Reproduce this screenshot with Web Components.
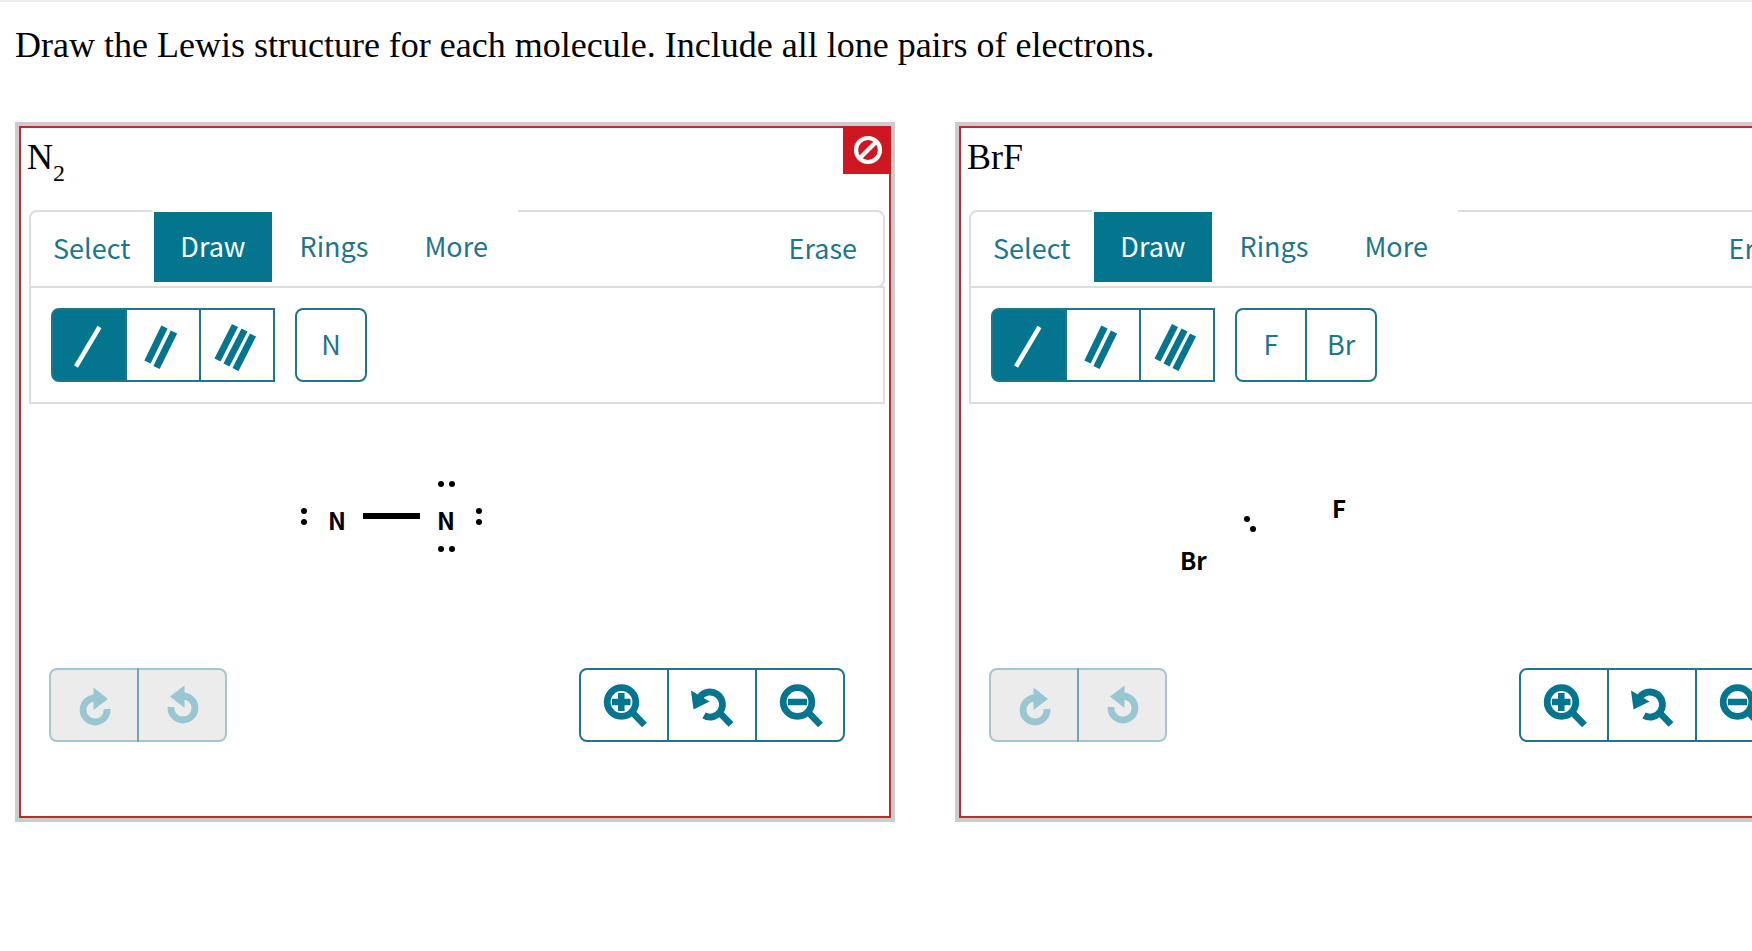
<!DOCTYPE html>
<html lang="en">
<head>
<meta charset="utf-8">
<title>Lewis structures</title>
<style>
  body {
    margin: 0;
    background: #fff;
    color: #000;
    font-family: "Liberation Serif", serif;
    overflow-x: hidden;
  }
</style>
</head>
<body>

<lewis-question>
  <span slot="prompt">Draw the Lewis structure for each molecule. Include all lone pairs of electrons.</span>

  <molecule-editor atoms="N" molecule="n2">N<sub>2</sub></molecule-editor>
  <molecule-editor atoms="F,Br" molecule="brf">BrF</molecule-editor>
</lewis-question>

<script>
const icons = {
  single: '<path d="M10.5-18-13 21.500" stroke-width="4.500"/>',
  double: '<path d="M1.500-18-15.500 17M11-13-6.500 22.500" stroke-width="7"/>',
  triple: '<path d="M-2-19.500-19.500 15M7.500-15-10.500 20M16-10-1.500 24.500" stroke-width="6.800"/>',
  redo: '<path d="M13 4A12 12 0 1 1 1-7" stroke-width="6.800"/><path class="solid" d="M-.5-17.500 14-6-.5 5z"/>',
  undo: '<path d="M-11 2A12 12 0 1 0 1-9" stroke-width="6.800"/><path class="solid" d="M2.500-19.500-12-8.500 2.500 3z"/>',
  zoomIn: '<circle cx="-2.500" cy="-3" r="14.300" stroke-width="6.800"/><path d="M8 7 20.500 20" stroke-width="6.800"/><path d="M-12-3h18.500M-2.700-12v18" stroke-width="6.500"/>',
  zoomReset: '<path d="M-12-8A12.500 12.500 0 1 1-8 10.500M7 7 19 19.500" stroke-width="6.800"/><path class="solid" d="M-21-14.500-2.500-3.500-18.500 4.500z"/>',
  zoomOut: '<circle cx="-2.500" cy="-3" r="14.300" stroke-width="6.800"/><path d="M8 7 20.500 20" stroke-width="6.800"/><path d="M-12-3h19" stroke-width="6.500"/>',
  none: '<circle cx="1" r="12" stroke-width="4.200"/><path d="M-7 8 9-8" stroke-width="4.200"/>'
};

// atoms, bonds and lone pairs on the drawing canvas
const molecules = {
  n2: `
    <text x="299" y="126">N</text>
    <text x="408" y="126">N</text>
    <path d="M334 112h57"/>
    <circle cx="275" cy="107" r="3"/><circle cx="275" cy="118" r="3"/>
    <circle cx="412" cy="80" r="3"/><circle cx="423" cy="80" r="3"/>
    <circle cx="450" cy="107" r="3"/><circle cx="450" cy="118" r="3"/>
    <circle cx="412" cy="145" r="3"/><circle cx="423" cy="145" r="3"/>`,
  brf: `
    <text x="211" y="166">Br</text>
    <text x="363" y="114">F</text>
    <circle cx="278" cy="115" r="3"/><circle cx="284" cy="125" r="3"/>`
};

class LewisQuestion extends HTMLElement {
  constructor() {
    super();
    this.attachShadow({ mode: 'open' });
    this.shadowRoot.innerHTML = `
      <style>
        :host {
          display: block;
          border-top: 2px solid #ededed;
          padding: 21px 0 0 15px;
        }
        p {
          margin: 0 0 55px;
          font-size: 36px;
          line-height: 44px;
        }
        .editors {
          display: flex;
          gap: 60px;
        }
      </style>
      <p><slot name="prompt"></slot></p>
      <div class="editors"><slot></slot></div>
    `;
  }
}

class ToolIcon extends HTMLElement {
  connectedCallback() {
    if (this.shadowRoot) return;
    this.attachShadow({ mode: 'open' });
    this.shadowRoot.innerHTML = `
      <style>
        :host { display: inline-flex; }
        svg {
          width: 52px;
          height: 52px;
          fill: none;
          stroke: currentColor;
        }
        .solid { fill: currentColor; stroke: none; }
      </style>
      <svg viewBox="-26 -26 52 52" aria-hidden="true">${icons[this.getAttribute('name')]}</svg>
    `;
  }
}

class ToolGroup extends HTMLElement {
  constructor() {
    super();
    this.attachShadow({ mode: 'open' });
    this.shadowRoot.innerHTML = `
      <style>
        :host { display: flex; }
        ::slotted(button) {
          box-sizing: border-box;
          width: var(--tool-width, 90px);
          height: 74px;
          margin: 0;
          padding: 0;
          display: flex;
          align-items: center;
          justify-content: center;
          border: 2px solid #1f7589;
          background: #fff;
          color: #03758f;
          font: inherit;
          cursor: pointer;
        }
        /* neighbours share one border */
        ::slotted(button:not(:first-child)) { margin-left: -2px; }
        ::slotted(button:first-child) {
          border-top-left-radius: 8px;
          border-bottom-left-radius: 8px;
        }
        ::slotted(button:last-child) {
          border-top-right-radius: var(--end-radius, 8px);
          border-bottom-right-radius: var(--end-radius, 8px);
        }
        ::slotted(button[aria-pressed="true"]) {
          background: #03758f;
          color: #fff;
        }
        ::slotted(button:disabled) {
          background: #d2d2d2;
          opacity: 0.4;
          cursor: default;
        }
      </style>
      <slot></slot>
    `;
  }
}

class MoleculeEditor extends HTMLElement {
  constructor() {
    super();
    this.attachShadow({ mode: 'open' });
  }

  connectedCallback() {
    const atoms = this.getAttribute('atoms').split(',');
    const molecule = this.getAttribute('molecule');

    this.shadowRoot.innerHTML = `
      <style>
        :host {
          box-sizing: border-box;
          flex: 0 0 calc(50vw + 4px);
          min-width: 720px;
          border: 4px solid #ccc;
        }
        .frame {
          position: relative;
          border: 2px solid #bf2a31;
          padding: 0 4px 74px 8px;
          font-family: "Noto Sans CJK SC", sans-serif;
          font-size: 27px;
          line-height: 36px;
        }
        h2 {
          margin: 0 0 0 -2px;
          height: 82px;
          font: 36px/58px "Liberation Serif", serif;
        }
        ::slotted(sub) {
          font-size: 24px;
          line-height: 0;
          vertical-align: -12px;
        }
        .badge {
          position: absolute;
          top: -2px;
          right: -2px;
          width: 48px;
          height: 48px;
          display: flex;
          align-items: center;
          justify-content: center;
          background: #cf1721;
          color: #fff;
        }
        .menu {
          display: flex;
          height: 74px;
          border: 2px solid #ddd;
          border-radius: 8px 8px 8px 0;
        }
        .menu button {
          border: 0;
          padding: 0 28px 2px;
          background: none;
          color: #1f7589;
          font: inherit;
          cursor: pointer;
        }
        .menu .select { padding: 0 22px 2px; }
        .modes {
          display: flex;
          height: 70px;
          margin-top: -2px;
          border: 2px solid #fff;
          background: #fff;
        }
        .menu .active {
          padding: 0 26px 2px;
          background: #03758f;
          color: #fff;
        }
        .menu .erase {
          margin-left: auto;
          padding: 0 26px 2px;
        }
        .tools {
          display: flex;
          gap: 20px;
          margin-top: -2px;
          padding: 20px;
          border: 2px solid #ddd;
        }
        .bonds {
          --tool-width: 76px;
          --end-radius: 0;
        }
        .atoms {
          --tool-width: 72px;
        }
        .atoms button {
          padding-bottom: 2px;
          color: #1f7589;
        }
        .canvas {
          display: block;
          width: 100%;
          height: 264px;
          overflow: visible;
          font-size: 24px;
          font-weight: bold;
        }
        .canvas path { stroke: #000; stroke-width: 6; }
        .controls {
          display: flex;
          justify-content: space-between;
          padding: 0 40px 0 20px;
        }
      </style>
      <div class="frame">
        <h2><slot></slot></h2>
        <div class="badge" role="img" aria-label="Incorrect"><tool-icon name="none"></tool-icon></div>
        <div class="menu">
          <button class="select">Select</button>
          <div class="modes">
            <button class="active">Draw</button>
            <button>Rings</button>
            <button>More</button>
          </div>
          <button class="erase">Erase</button>
        </div>
        <div class="tools">
          <tool-group class="bonds">
            <button aria-label="Single bond" aria-pressed="true"><tool-icon name="single"></tool-icon></button>
            <button aria-label="Double bond"><tool-icon name="double"></tool-icon></button>
            <button aria-label="Triple bond"><tool-icon name="triple"></tool-icon></button>
          </tool-group>
          <tool-group class="atoms">
            ${atoms.map(a => `<button>${a}</button>`).join('')}
          </tool-group>
        </div>
        <svg class="canvas">${molecules[molecule]}</svg>
        <div class="controls">
          <tool-group>
            <button aria-label="Redo" disabled><tool-icon name="redo"></tool-icon></button>
            <button aria-label="Undo" disabled><tool-icon name="undo"></tool-icon></button>
          </tool-group>
          <tool-group>
            <button aria-label="Zoom in"><tool-icon name="zoomIn"></tool-icon></button>
            <button aria-label="Reset zoom"><tool-icon name="zoomReset"></tool-icon></button>
            <button aria-label="Zoom out"><tool-icon name="zoomOut"></tool-icon></button>
          </tool-group>
        </div>
      </div>
    `;

    this.shadowRoot.querySelectorAll('.bonds button').forEach((btn, i, all) => {
      btn.addEventListener('click', () => {
        all.forEach(b => b.setAttribute('aria-pressed', b === btn));
      });
    });
  }
}

customElements.define('tool-icon', ToolIcon);
customElements.define('tool-group', ToolGroup);
customElements.define('molecule-editor', MoleculeEditor);
customElements.define('lewis-question', LewisQuestion);
</script>
</body>
</html>
